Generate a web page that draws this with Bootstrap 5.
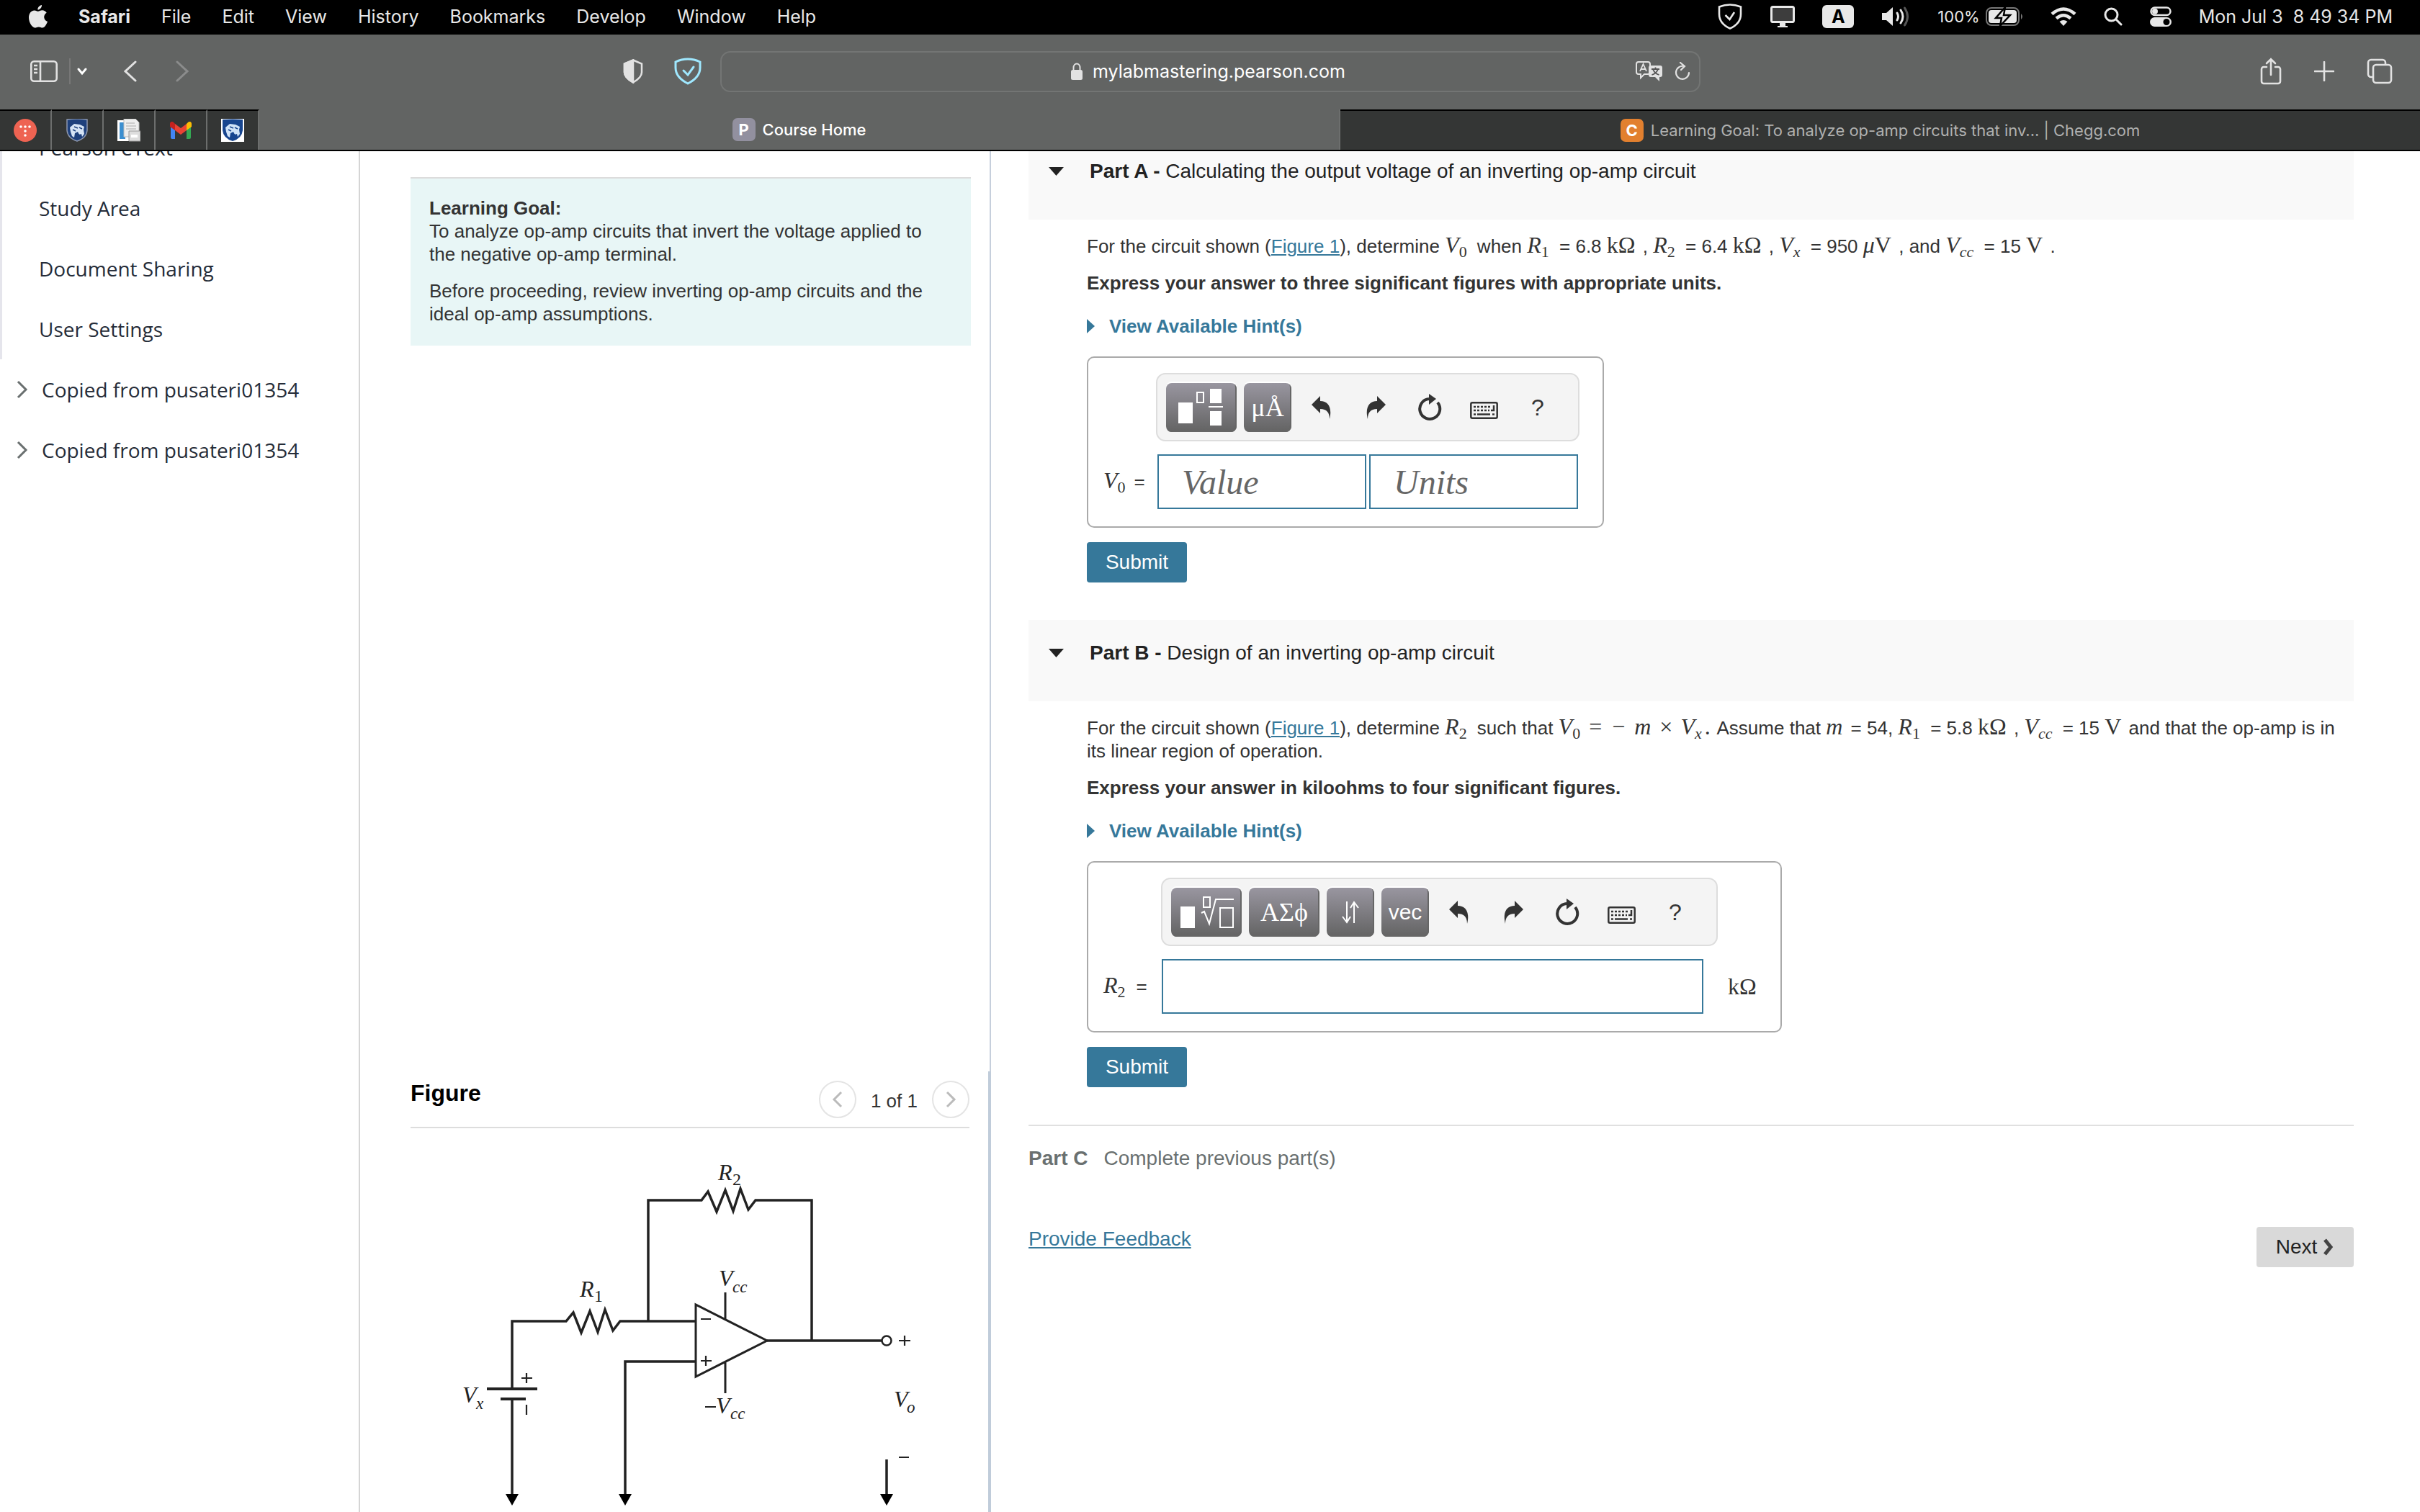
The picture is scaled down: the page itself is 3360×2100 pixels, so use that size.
<!DOCTYPE html>
<html lang="en">
<head>
<meta charset="utf-8">
<title>Course Home</title>
<meta name="viewport" content="width=device-width, initial-scale=1">
<link href="https://cdn.jsdelivr.net/npm/bootstrap@5.3.0/dist/css/bootstrap.min.css" rel="stylesheet">
<style>
html,body{height:100%}
body{font-family:"Liberation Sans",Arial,sans-serif;font-size:26px;line-height:32px;color:#333;background:#fff;overflow:hidden}
svg{display:block;flex:none}
button{padding:0;border:0;background:none;color:inherit}
.ui{font-family:Inter,sans-serif;font-size:25px}
.menubar{height:48px;background:#000;color:#e8e8e8;padding:0 38px 2px 40px}
.menubar a{color:inherit;text-decoration:none}
.menus{gap:43px}
.status{gap:38px}
.fs-pct{font-size:22px}
.clock{white-space:pre}
.lang-box{width:44px;background:#e8e8e8}
.toolbar{height:104px;background:#626463;color:#e2e2e2;padding:0 38px 2px 42px}
.lead-tools{width:820px}
.mid-tools{gap:26px}
.shields{gap:42px}
.end-tools{width:960px;gap:45px}
.addr{width:1361px;height:57px;border:2px solid #737574;border-radius:14px;padding:0 12px}
.addr input{width:354px;border:0;background:none;color:#fff;font-size:25px;padding:0;outline:0}
.tabs{height:58px;background:#343635;border-bottom:2px solid #000}
.tabs a{text-decoration:none;color:#b0b1b0;font-size:22px}
.pin{width:72px;border-top:2px solid #000;border-right:2px solid #6c6e6d}
.tab-on{flex:1 1 0;background:#626463}
.tabs .tab-on{color:#fff;font-weight:500;border-right:2px solid #6c6e6d}
.tab-off{flex:1 1 0;border-top:2px solid #000}
.fav{width:32px;height:32px;border-radius:7px;font-weight:700;font-size:22px;line-height:32px;color:#fff;text-align:center;margin-right:10px}
.fav-p{background:#92909f}
.fav-c{background:#e2802f}
.nav-col{width:500px;border-right:2px solid #d5d5d5;font-family:"Open Sans",sans-serif;font-size:28px}
.nav-col .scrolled{margin-top:-47px}
.nav-col a{height:84px;color:#252c38;text-decoration:none}
.sub-link{border-left:3px solid #e5e5ec;padding-left:51px}
.top-link{padding-left:22px;gap:19px}
.goal-col{width:876px}
.goal-top{border-right:2px solid #c6cfdc;padding:36px 26px 0 70px}
.goal{background:#e8f6f6;border-top:2px solid #dcdcdc;padding:25px 26px 28px}
.goal p{margin:0 0 19px}
.goal p:last-child{margin:0}
.fig{border-right:4px solid #c0ccda;padding:13px 26px 0 70px}
.fig-head{border-bottom:2px solid #ddd;height:66px}
.fig-head h2{font-size:32px;font-weight:700;color:#000;margin:0;line-height:34px}
.pager{padding-bottom:12px}
.pager span{padding-top:4px;margin:0 20px}
.round{width:52px;height:52px;border:2px solid #e4e4e4;border-radius:50%}
.work{padding:0 92px 0 52px}
.work .scrolled{margin-top:-18px}
.part-head{background:#f9f9f9;height:113px;padding:28px 0 0 28px;font-size:28px;line-height:36px;color:#222;gap:36px}
.part-head svg{margin-top:12px}
.part-body{padding:21px 0 52px 81px}
.part-body p{margin:0 0 19px}
a.lnk{color:#36789a}
.hint{color:#36789a;font-weight:700;text-decoration:none;gap:20px;margin:28px 0 26px}
.mi{font-family:"Liberation Serif","Times New Roman",serif;font-style:italic;font-size:32px;line-height:0}
.mr{font-family:"Liberation Serif","Times New Roman",serif;font-size:32px;line-height:0;margin-right:3px}
.mi sub{font-size:22px;bottom:-6px;line-height:0;margin-right:7px}
.mi sub.up{font-style:normal}
.mvar{margin-right:4px}
.rel{margin:0 14px 0 5px}
.neg{margin-right:13px}
.times{margin:0 11px 0 8px}
.answer{border:2px solid #aaa;border-radius:10px;height:238px;padding:21px 0 0 21px}
.ans-a{width:718px}.ans-b{width:965px}
.lab .mi sub{margin-right:12px}
.ans-a .lab{width:75px}.ans-b .lab{width:81px}
.ans-b .lab .mi sub{margin-right:15px}
.ans-a .palette{width:588px;margin-left:73px}.ans-b .palette{width:773px;margin-left:80px}
.palette{height:95px;border:2px solid #ddd;border-radius:13px;background:#f4f4f4;padding:0 12px}
.key{flex:none;height:68px;border-radius:8px;background:linear-gradient(#9996a0,#636363);color:#fff;margin-right:10px;box-shadow:inset -2px -2px 0 #666,0 -2px 0 #fff;font-size:30px;display:flex;align-items:center;justify-content:center}
.key.sym{font-family:"Liberation Serif",serif;font-size:36px}
.key.last{margin-right:22px}
.k98{width:98px}.k66{width:66px}
.ico{flex:none;width:40px;margin-right:35px;display:flex;justify-content:center;font-size:32px}
.ico:last-child{margin-right:0}
.box{height:76px;border:2px solid #36789a;border-radius:0;background:#fff;padding:0 32px;font-family:"Liberation Serif",serif;font-size:48px;font-style:italic}
.box::placeholder{color:#666;opacity:1}
.half{width:290px}
.wide{width:752px}
.unit{margin-left:34px}
.row-in{margin-top:18px;height:76px}
.submit{width:139px;height:56px;border-radius:4px;background:#36789a;color:#fff;font-size:28px;margin-top:20px;display:block}
.part-c{border-top:2px solid #e0e0e0;padding-top:27px;font-size:28px;line-height:36px;color:#6a7070}
.part-c b{margin-right:22px}
.foot{margin-top:76px;font-size:28px;line-height:36px}
.next{width:135px;height:56px;border-radius:4px;background:#d9d9d9;color:#222;gap:8px;margin-top:1px}
</style>
</head>
<body class="d-flex flex-column">
<header class="ui flex-shrink-0">
<nav class="menubar d-flex align-items-center justify-content-between" aria-label="Menu bar">
 <div class="menus d-flex align-items-center">
  <svg width="26" height="32" viewBox="0 0 26 32" fill="#e8e8e8"><path d="M18 0c.3 3-2.400 6.600-5.600 6.600C12 3.500 15 .4 18 0zM13 8.800c1.400 0 3-1.500 5.700-1.500 2.300 0 4.700 1.200 6 3.400-5.200 3-4.400 10.200 1.300 12.300-1 3-4 8.600-7 8.600-2 0-2.800-1.200-5.200-1.200S10.400 31.600 8.600 31.600C5 31.600 0 24.600 0 17.600 0 10.800 4 7.400 7.600 7.400c2.400 0 4.200 1.400 5.400 1.400z"/></svg>
  <a href="#" class="fw-bold">Safari</a><a href="#">File</a><a href="#">Edit</a><a href="#">View</a><a href="#">History</a><a href="#">Bookmarks</a><a href="#">Develop</a><a href="#">Window</a><a href="#">Help</a>
 </div>
 <div class="status d-flex align-items-center">
  <svg width="36" height="36" viewBox="0 0 36 36" fill="none" stroke="#e8e8e8" stroke-width="2.600"><path d="M18 1.500c5 0 10 1 15 3v10c0 9-6 16-15 20C9 30.500 3 23.500 3 14.500v-10c5-2 10-3 15-3z"/><path d="M11.500 16l6 6L24 12"/></svg>
  <svg width="34" height="30" viewBox="0 0 34 30"><rect x="1.500" y="1.500" width="31" height="21" rx="2" fill="#3d3d3d" stroke="#e8e8e8" stroke-width="3"/><path d="M2 21h30v3H2zM13 24h8v4h3v2H10v-2h3z" fill="#e8e8e8"/></svg>
  <div class="lang-box text-black fw-bold text-center rounded-2">A</div>
  <svg width="40" height="28" viewBox="0 0 40 28" fill="none" stroke-width="3" stroke-linecap="round"><path d="M1 9h6l9-8v26l-9-8H1z" fill="#e8e8e8"/><path d="M22 9q3 5 0 10M27 5q6 9 0 18" stroke="#e8e8e8"/><path d="M32.500 2q8 12 0 24" stroke="#555"/></svg>
  <div class="d-flex align-items-center gap-2"><span class="fs-pct">100%</span>
  <svg width="52" height="26" viewBox="0 0 52 26"><rect x="1" y="1" width="45" height="24" rx="7" fill="none" stroke="#777" stroke-width="2"/><rect x="4" y="4" width="39" height="18" rx="4" fill="#e8e8e8"/><path d="M49 9q4 4 0 8z" fill="#777"/><path d="M27 0L14 15h8l-2 11L34 11h-9z" fill="#e8e8e8" stroke="#000" stroke-width="2.500"/></svg></div>
  <svg width="36" height="26" viewBox="0 0 36 26" fill="none" stroke="#e8e8e8" stroke-width="4.500"><path d="M2 9.500q16-14 32 0M8 15.500q10-8.500 20 0"/><path d="M18 26l-5.500-6q5.500-4 11 0z" fill="#e8e8e8" stroke="none"/></svg>
  <svg width="26" height="26" viewBox="0 0 26 26" fill="none" stroke="#e8e8e8" stroke-width="3" stroke-linecap="round"><circle cx="10.500" cy="10.500" r="8.500"/><path d="M17 17l7 7"/></svg>
  <svg width="30" height="28" viewBox="0 0 30 28"><rect x="1.500" y="1.500" width="27" height="10.500" rx="5.200" fill="none" stroke="#e8e8e8" stroke-width="2.500"/><circle cx="7" cy="6.700" r="4" fill="#e8e8e8"/><rect x="0" y="15" width="30" height="13" rx="6.500" fill="#e8e8e8"/><circle cx="23" cy="21.500" r="4.500" fill="#000"/></svg>
  <span class="clock">Mon Jul 3  8 49 34 PM</span>
 </div>
</nav>
<div class="toolbar d-flex align-items-center justify-content-between">
 <div class="lead-tools d-flex align-items-center">
  <button aria-label="Sidebar"><svg width="38" height="30" viewBox="0 0 38 30" fill="none" stroke="#e2e2e2" stroke-width="2.600"><rect x="1.300" y="1.300" width="35.400" height="27.400" rx="4"/><path d="M14 1v28M5 7h5M5 12h5M5 17h5"/></svg></button>
  <svg class="ms-3" width="66" height="36" viewBox="0 0 66 36" fill="none" stroke="#fff" stroke-width="3" stroke-linecap="round"><path d="M1 0v36" stroke="#777" stroke-width="2"/><path d="M13 15l5 6 5-6"/></svg>
  <button class="me-5" aria-label="Back"><svg width="28" height="30" viewBox="0 0 28 30" fill="none" stroke="#e2e2e2" stroke-width="3" stroke-linecap="round"><path d="M26 2L12 15l14 13"/></svg></button>
  <button class="ms-1" aria-label="Forward"><svg width="20" height="30" viewBox="0 0 20 30" fill="none" stroke="#8b8c8c" stroke-width="3" stroke-linecap="round"><path d="M4 2l14 13L4 28"/></svg></button>
 </div>
 <div class="mid-tools d-flex align-items-center">
  <div class="shields d-flex">
  <button aria-label="Privacy report"><svg width="30" height="34" viewBox="0 0 30 34" fill="none" stroke="#e2e2e2" stroke-width="2.500"><path d="M15 1.500l12 5v12c0 6-5 10-12 14C8 28.500 3 24.500 3 18.500v-12z"/><path d="M15 1.500v31C8 28.500 3 24.500 3 18.500v-12z" fill="#e2e2e2"/></svg></button>
  <button aria-label="Blocker"><svg width="38" height="38" viewBox="0 0 38 38" fill="none" stroke="#9fe8ff" stroke-width="3"><path d="M19 2c6 0 11 1 17 4v8c0 10-7 17-17 22C9 31 2 24 2 14V6c6-3 11-4 17-4z"/><path d="M13 18l6 6 8-11" stroke-linecap="round"/></svg></button>
  </div>
  <div class="addr d-flex align-items-center">
   <div class="flex-fill d-flex align-items-center justify-content-center gap-2 ps-5">
   <svg width="20" height="24" viewBox="0 0 20 24" class="ms-4 me-1"><rect x="2" y="10" width="16" height="14" rx="2.500" fill="#e2e2e2"/><path d="M5.500 11V7a4.500 5.500 0 0 1 9 0v4" fill="none" stroke="#e2e2e2" stroke-width="2"/></svg>
   <input type="text" aria-label="Address" value="mylabmastering.pearson.com"></div>
   <svg width="38" height="28" viewBox="0 0 38 28"><path d="M4 1h13a3 3 0 0 1 3 3v11a3 3 0 0 1-3 3h-5l-5 5v-5H4a3 3 0 0 1-3-3V4a3 3 0 0 1 3-3z" fill="none" stroke="#e2e2e2" stroke-width="2"/><path d="M6 14l4.500-10L15 14M7.500 11h6" fill="none" stroke="#e2e2e2" stroke-width="1.800"/><path d="M21 6h13a3 3 0 0 1 3 3v10a3 3 0 0 1-3 3h-1v6l-6-6h-6a3 3 0 0 1-3-3V9a3 3 0 0 1 3-3z" fill="#e2e2e2"/><path d="M22 11h11M27.500 8.500V11M31 11q-2 6-8.500 8M24 11q2 6 8.500 8" fill="none" stroke="#555" stroke-width="1.800"/></svg>
   <button aria-label="Reload" class="ms-3"><svg width="22" height="26" viewBox="0 0 22 26" fill="none" stroke="#e2e2e2" stroke-width="2.200" stroke-linecap="round"><path d="M20 15a9 9 0 1 1-7-9M8 1l6 5-5 5"/></svg></button>
  </div>
 </div>
 <div class="end-tools d-flex align-items-center justify-content-end">
  <button aria-label="Share"><svg width="30" height="38" viewBox="0 0 30 38" fill="none" stroke="#e2e2e2" stroke-width="2.600" stroke-linecap="round"><path d="M9 13H5a3 3 0 0 0-3 3v17a3 3 0 0 0 3 3h20a3 3 0 0 0 3-3V16a3 3 0 0 0-3-3h-4M15 24V2M9 8l6-6 6 6"/></svg></button>
  <button aria-label="New tab"><svg width="28" height="28" viewBox="0 0 28 28" stroke="#e2e2e2" stroke-width="2.600" stroke-linecap="round"><path d="M14 1v26M1 14h26"/></svg></button>
  <button aria-label="Tab overview"><svg width="36" height="36" viewBox="0 0 36 36" fill="none" stroke="#e2e2e2" stroke-width="2.600"><path d="M9 26H6a4 4 0 0 1-4-4V6a4 4 0 0 1 4-4h16a4 4 0 0 1 4 4v3"/><rect x="9" y="9" width="25" height="25" rx="4"/></svg></button>
 </div>
</div>
<nav class="tabs d-flex" aria-label="Tabs">
 <a href="#" class="pin d-flex align-items-center justify-content-center" aria-label="Pinned 1"><svg width="32" height="32" viewBox="0 0 32 32"><circle cx="16" cy="16" r="16" fill="#ee6352"/><g fill="#fff"><circle cx="10" cy="11" r="1.800"/><circle cx="16" cy="11" r="1.800"/><circle cx="22" cy="11" r="1.800"/><circle cx="16" cy="17" r="1.800"/><circle cx="16" cy="23" r="1.800"/></g></svg></a>
 <a href="#" class="pin d-flex align-items-center justify-content-center" aria-label="Pinned 2"><svg width="30" height="32" viewBox="0 0 30 32"><path d="M1 1q14-2 28 0v15q-1 11-14 15Q2 27 1 16z" fill="#1e407c" stroke="#8d97ad" stroke-width="1.500"/><path d="M5 12l6-5 8 1 6 3-1 4 1 6-3 4-1-4-3 1-2-4-4 2-1 6-3-2-2-6z" fill="#d6e4f5"/><path d="M11 11l5 2M18 12l4 2M9 15l4 2M14 20l5 3" stroke="#1e407c" stroke-width="1.500"/></svg></a>
 <a href="#" class="pin d-flex align-items-center justify-content-center" aria-label="Pinned 3"><svg width="32" height="32" viewBox="0 0 32 32"><rect x="0" y="2" width="22" height="29" fill="#fff"/><rect x="3" y="5" width="8" height="23" fill="#3c8fd0"/><path d="M9 0h16l5 5v20H9z" fill="#eee" stroke="#bbb"/><path d="M12 6h12M12 10h14M12 14h14" stroke="#ccc" stroke-width="2"/><path d="M16 17h16v14H16z" fill="#ddd" stroke="#999"/><path d="M19 22h9v4h-9z" fill="#fff"/></svg></a>
 <a href="#" class="pin d-flex align-items-center justify-content-center" aria-label="Pinned 4"><svg width="30" height="24" viewBox="0 0 30 24"><path d="M1 6v16a2 2 0 0 0 2 2h4V10z" fill="#4285f4"/><path d="M29 6v16a2 2 0 0 1-2 2h-4V10z" fill="#34a853"/><path d="M23 3v9l7-5V3c0-3-3-4-5-2z" fill="#fbbc04"/><path d="M7 3v9L0 7V3c0-3 3-4 5-2z" fill="#c5221f"/><path d="M7 3v9l8 6 8-6V3l-8 6z" fill="#ea4335"/></svg></a>
 <a href="#" class="pin d-flex align-items-center justify-content-center" aria-label="Pinned 5"><svg width="32" height="32" viewBox="0 0 32 32"><path fill="#fff" d="M0 0h32v32H0z"/><path d="M2 1q14-1 28 0v15q-1 11-14 15Q3 27 2 16z" fill="#17458f"/><path d="M6 12l6-5 8 1 6 3-1 4 1 6-3 4-1-4-3 1-2-4-4 2-1 6-3-2-2-6z" fill="#cfe2f7"/><path d="M12 11l5 2M19 12l4 2M10 15l4 2M15 20l5 3" stroke="#17458f" stroke-width="1.500"/></svg></a>
 <a href="#" class="tab-on d-flex align-items-center justify-content-center"><span class="fav fav-p">P</span><span>Course Home</span></a>
 <a href="#" class="tab-off d-flex align-items-center justify-content-center"><span class="fav fav-c">C</span><span>Learning Goal: To analyze op-amp circuits that inv... | Chegg.com</span></a>
</nav>
</header>
<main class="d-flex flex-fill overflow-hidden">
 <nav class="nav-col flex-shrink-0" aria-label="Course menu">
  <div class="scrolled">
  <a href="#" class="sub-link d-flex align-items-center">Pearson eText</a>
  <a href="#" class="sub-link d-flex align-items-center">Study Area</a>
  <a href="#" class="sub-link d-flex align-items-center">Document Sharing</a>
  <a href="#" class="sub-link d-flex align-items-center">User Settings</a>
  <a href="#" class="top-link d-flex align-items-center"><svg width="17" height="26" viewBox="0 0 17 26" fill="none" stroke="#6a7070" stroke-width="3"><path d="M3 2l11 11L3 24"/></svg>Copied from pusateri01354</a>
  <a href="#" class="top-link d-flex align-items-center"><svg width="17" height="26" viewBox="0 0 17 26" fill="none" stroke="#6a7070" stroke-width="3"><path d="M3 2l11 11L3 24"/></svg>Copied from pusateri01354</a>
  </div>
 </nav>
 <section class="goal-col flex-shrink-0 d-flex flex-column">
  <div class="goal-top flex-fill">
   <div class="goal"><p><b>Learning Goal:</b><br>To analyze op-amp circuits that invert the voltage applied to the negative op-amp terminal.</p><p>Before proceeding, review inverting op-amp circuits and the ideal op-amp assumptions.</p></div>
  </div>
  <div class="fig flex-shrink-0">
   <div class="fig-head d-flex justify-content-between">
    <h2>Figure</h2>
    <div class="pager d-flex align-items-center">
     <button class="round d-flex align-items-center justify-content-center" aria-label="Previous figure"><svg width="16" height="24" viewBox="0 0 16 24" fill="none" stroke="#bbb" stroke-width="3"><path d="M13 2L3 12l10 10"/></svg></button>
     <span>1 of 1</span>
     <button class="round d-flex align-items-center justify-content-center" aria-label="Next figure"><svg width="16" height="24" viewBox="0 0 16 24" fill="none" stroke="#bbb" stroke-width="3"><path d="M3 2l10 10L3 22"/></svg></button>
    </div>
   </div>
   <svg width="776" height="533" viewBox="570 1567 776 533" fill="none" stroke="#222" stroke-width="3.500">
    <path d="M711 1929V1835H786L796 1823 807 1851 819 1821 830 1850 840 1819 851 1848 861 1835H966M900 1835V1667H974L983 1655 995 1683 1007 1653 1018 1682 1028 1651 1039 1680 1049 1667H1127V1862M1065 1862H1224M966 1891H868V2078M711 1943V2078M1231 2027V2078"/>
    <path d="M966 1812V1912L1065 1862ZM1007 1795V1832M1007 1891V1935" stroke-width="3"/>
    <path d="M676 1929H746M695 1943H730" stroke-width="4"/>
    <circle cx="1231" cy="1862" r="6.500" fill="#fff" stroke-width="2.500"/>
    <path d="M724 1914H739M731 1907V1921M731 1951V1965M973 1832H987M973 1890H988M980 1883V1897M1248 1862H1264M1256 1855V1869M1248 2024H1262M979 1954H994" stroke-width="2.200"/>
    <path d="M702 2075H720L711 2091ZM859 2075H877L868 2091ZM1222 2075H1240L1231 2091Z" fill="#000" stroke="none"/>
    <g fill="#222" stroke="none" font-family="Liberation Serif,serif" font-style="italic" font-size="32">
     <text x="997" y="1639">R</text><text x="1017" y="1646" font-size="24" font-style="normal">2</text>
     <text x="805" y="1801">R</text><text x="825" y="1808" font-size="24" font-style="normal">1</text>
     <text x="998" y="1786">V</text><text x="1017" y="1795" font-size="23">cc</text>
     <text x="994" y="1963">V</text><text x="1014" y="1971" font-size="23">cc</text>
     <text x="642" y="1948">V</text><text x="661" y="1957" font-size="23">x</text>
     <text x="1241" y="1954">V</text><text x="1259" y="1962" font-size="23">o</text>
    </g>
   </svg>
  </div>
 </section>
 <section class="work flex-fill">
  <div class="scrolled">
  <div class="part-head d-flex"><svg width="21" height="12" viewBox="0 0 21 12"><path d="M0 0h21L10.500 12z" fill="#222"/></svg><div><b>Part A -</b> Calculating the output voltage of an inverting op-amp circuit</div></div>
  <div class="part-body">
   <p>For the circuit shown (<a class="lnk" href="#">Figure 1</a>), determine <span class="mi">V<sub class="up">0</sub></span> when <span class="mi">R<sub class="up">1</sub></span> = 6.8 <span class="mr">kΩ</span> , <span class="mi">R<sub class="up">2</sub></span> = 6.4 <span class="mr">kΩ</span> , <span class="mi">V<sub>x</sub></span> = 950 <span class="mi">μ</span><span class="mr">V</span> , and <span class="mi">V<sub>cc</sub></span> = 15 <span class="mr">V</span> .</p>
   <p><b>Express your answer to three significant figures with appropriate units.</b></p>
   <a href="#" class="hint d-flex align-items-center"><svg width="11" height="20" viewBox="0 0 11 20"><path d="M0 0l11 10L0 20z" fill="#36789a"/></svg>View Available Hint(s)</a>
   <div class="answer ans-a">
    <div class="palette d-flex align-items-center">
     <button class="key k98" aria-label="Templates"><svg width="64" height="52" viewBox="0 0 64 52" fill="#fff"><path d="M0 19h20v29H0zM44 0h16v20H44zM42 24h20v2H42zM44 31h16v20H44z"/><path d="M26 5h9v14h-9z" fill="none" stroke="#fff" stroke-width="2"/></svg></button>
     <button class="key k66 sym last">μÅ</button>
     <button class="ico" aria-label="Undo"><svg width="28" height="32" viewBox="0 0 28 32"><path d="M0 12L12 0v7c11 0 17 9 13 25 0-9-4-14-13-14v6z" fill="#333"/></svg></button>
     <button class="ico" aria-label="Redo"><svg width="28" height="32" viewBox="0 0 28 32"><path d="M28 12L16 0v7C5 7-1 16 3 32c0-9 4-14 13-14v6z" fill="#333"/></svg></button>
     <button class="ico" aria-label="Reset"><svg width="34" height="38" viewBox="0 0 34 38"><path d="M28 12a14 14 0 1 1-12-5" fill="none" stroke="#333" stroke-width="4"/><path d="M16 0l10 7-10 8z" fill="#333"/></svg></button>
     <button class="ico pt-2" aria-label="Keyboard"><svg width="39" height="24" viewBox="0 0 39 24" fill="none" stroke="#333" stroke-width="2.500"><rect x="1.300" y="1.300" width="36.400" height="21.400" rx="2"/><path d="M5 7h25M5 12h22" stroke-dasharray="3 2"/><path d="M5 17.500h3M10 17.500h18M31 17.500h3M33 5v7h-4"/></svg></button>
     <button class="ico">?</button>
    </div>
    <div class="row-in d-flex align-items-center"><label class="lab" for="val"><span class="mi">V<sub class="up">0</sub></span>=</label><div class="d-flex gap-1"><input id="val" class="box half" placeholder="Value"><input class="box half" placeholder="Units" aria-label="Units"></div></div>
   </div>
   <button class="submit">Submit</button>
  </div>
  <div class="part-head d-flex"><svg width="21" height="12" viewBox="0 0 21 12"><path d="M0 0h21L10.500 12z" fill="#222"/></svg><div><b>Part B -</b> Design of an inverting op-amp circuit</div></div>
  <div class="part-body">
   <p>For the circuit shown (<a class="lnk" href="#">Figure 1</a>), determine <span class="mi">R<sub class="up">2</sub></span> such that <span class="mi">V<sub class="up">0</sub></span><span class="mr rel">=</span><span class="mr neg">−</span><span class="mi mvar">m</span><span class="mr times">×</span><span class="mi">V<sub class="me-1">x</sub></span><span class="mr">.</span> Assume that <span class="mi mvar">m</span> = 54, <span class="mi">R<sub class="up">1</sub></span> = 5.8 <span class="mr">kΩ</span> , <span class="mi">V<sub>cc</sub></span> = 15 <span class="mr">V</span> and that the op-amp is in its linear region of operation.</p>
   <p><b>Express your answer in kiloohms to four significant figures.</b></p>
   <a href="#" class="hint d-flex align-items-center"><svg width="11" height="20" viewBox="0 0 11 20"><path d="M0 0l11 10L0 20z" fill="#36789a"/></svg>View Available Hint(s)</a>
   <div class="answer ans-b">
    <div class="palette d-flex align-items-center">
     <button class="key k98" aria-label="Templates"><svg width="76" height="46" viewBox="0 0 76 46" fill="#fff"><path d="M2 15h20v30H2z"/><path d="M34 2h9v14h-9zM57 17h18v27H57zM31 24l4-2 7 17 9-34h25" fill="none" stroke="#fff" stroke-width="2"/></svg></button>
     <button class="key k98 sym">ΑΣϕ</button>
     <button class="key k66" aria-label="Scripts"><svg width="26" height="32" viewBox="0 0 26 32" fill="none" stroke="#fff" stroke-width="2"><path d="M8 1v28M2 22l6 8 5-8M18 31V3M13 10l5-8 6 8"/></svg></button>
     <button class="key k66 last">vec</button>
     <button class="ico" aria-label="Undo"><svg width="28" height="32" viewBox="0 0 28 32"><path d="M0 12L12 0v7c11 0 17 9 13 25 0-9-4-14-13-14v6z" fill="#333"/></svg></button>
     <button class="ico" aria-label="Redo"><svg width="28" height="32" viewBox="0 0 28 32"><path d="M28 12L16 0v7C5 7-1 16 3 32c0-9 4-14 13-14v6z" fill="#333"/></svg></button>
     <button class="ico" aria-label="Reset"><svg width="34" height="38" viewBox="0 0 34 38"><path d="M28 12a14 14 0 1 1-12-5" fill="none" stroke="#333" stroke-width="4"/><path d="M16 0l10 7-10 8z" fill="#333"/></svg></button>
     <button class="ico pt-2" aria-label="Keyboard"><svg width="39" height="24" viewBox="0 0 39 24" fill="none" stroke="#333" stroke-width="2.500"><rect x="1.300" y="1.300" width="36.400" height="21.400" rx="2"/><path d="M5 7h25M5 12h22" stroke-dasharray="3 2"/><path d="M5 17.500h3M10 17.500h18M31 17.500h3M33 5v7h-4"/></svg></button>
     <button class="ico">?</button>
    </div>
    <div class="row-in d-flex align-items-center"><label class="lab" for="res"><span class="mi">R<sub class="up">2</sub></span>=</label><input id="res" class="box wide"><span class="mr unit">kΩ</span></div>
   </div>
   <button class="submit">Submit</button>
  </div>
  <div class="part-c"><b>Part C</b>Complete previous part(s)</div>
  <div class="foot d-flex justify-content-between"><a class="lnk" href="#">Provide Feedback</a><button class="next d-flex align-items-center justify-content-center">Next <svg width="16" height="24" viewBox="0 0 16 24" fill="none" stroke="#444" stroke-width="5"><path d="M3 2l8 10L3 22"/></svg></button></div>
  </div>
 </section>
</main>
<script src="https://cdn.jsdelivr.net/npm/bootstrap@5.3.0/dist/js/bootstrap.bundle.min.js"></script>
</body>
</html>
